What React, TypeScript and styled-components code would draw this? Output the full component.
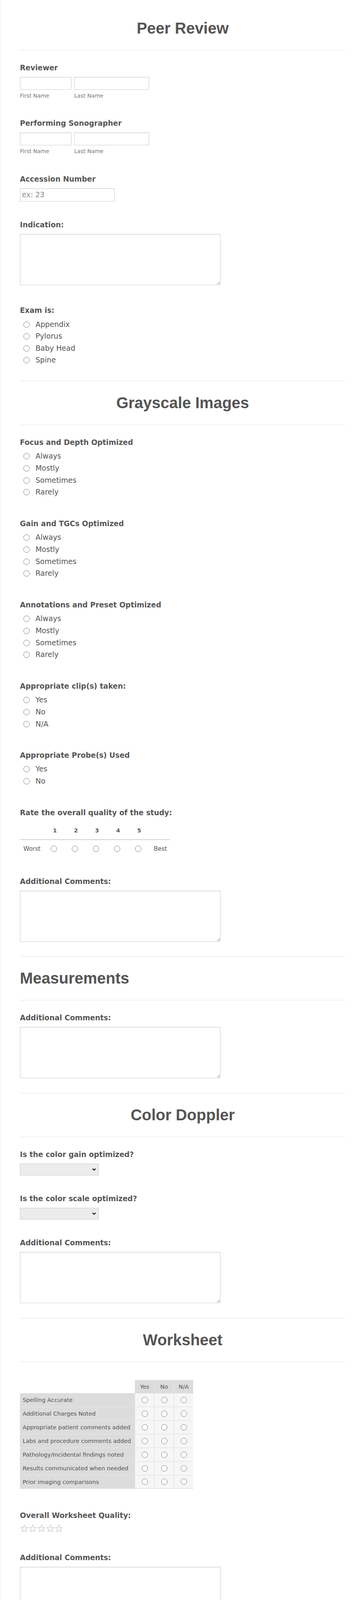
import React from 'react';
import styled, { createGlobalStyle } from 'styled-components';

const GlobalStyle = createGlobalStyle`
  html, body { margin: 0; padding: 0; background: #fff; }
  * { box-sizing: border-box; }
`;

const FONT = `"DejaVu Sans", Verdana, sans-serif`;

const Page = styled.div`
  width: 930px;
  border-left: 1px solid #e8e8e8;
  padding: 0 45px 45px 50px;
  font-family: ${FONT};
  color: #555;
`;

const Header = styled.div<{ $first?: boolean; $top?: number; $bottom?: number }>`
  border-top: ${p => (p.$first ? '0' : '1px solid #e4e4e4')};
  border-bottom: 1px solid #e4e4e4;
  padding-top: ${p => (p.$first ? 48 : p.$top ?? 31)}px;
  padding-bottom: ${p => p.$bottom ?? 32}px;
  margin-bottom: 17px;
`;

const HeaderTitle = styled.h2<{ $align?: 'left' | 'center'; $size?: number }>`
  margin: 0;
  font-family: "Liberation Sans", Arial, sans-serif;
  font-weight: bold;
  font-size: ${p => p.$size ?? 40}px;
  line-height: 48px;
  text-align: ${p => p.$align ?? 'center'};
  color: #555;
`;

const Field = styled.div`
  padding: 17px 0 32.3px;
`;

const Label = styled.div`
  font-weight: bold;
  font-size: 18.67px;
  line-height: 22px;
  color: #555;
  margin-bottom: 12px;
`;

const NameRow = styled.div`
  display: flex;
  gap: 7px;
`;

const NamePart = styled.div<{ $w: number }>`
  width: ${p => p.$w}px;
  display: flex;
  flex-direction: column;
`;

const TextInput = styled.input<{ $w?: number; $h?: number }>`
  display: block;
  width: ${p => (p.$w ? `${p.$w}px` : '100%')};
  height: ${p => p.$h ?? 33}px;
  margin: 0;
  border: 1px solid #cdcdcd;
  box-shadow: inset 0 1px 2px rgba(0, 0, 0, 0.08);
  padding: 0 4px;
  font-family: ${FONT};
  font-size: 18.67px;
  color: #555;
  background: #fff;
  &::placeholder { color: #8a8a8a; }
`;

const SubLabel = styled.span`
  margin-top: 5px;
  font-size: 14px;
  line-height: 21px;
  color: #777;
`;

const TextArea = styled.textarea`
  display: block;
  width: 514px;
  height: 131px;
  margin: 0 0 5px;
  border: 1px solid #cdcdcd;
  box-shadow: inset 0 1px 2px rgba(0, 0, 0, 0.08);
  font-family: ${FONT};
  font-size: 18.67px;
  color: #555;
  background: #fff;
  resize: both;
`;

const RadioGroup = styled.div`
  margin-top: -3px;
  padding: 0 0 5px 9px;
`;

const RadioRow = styled.label`
  display: flex;
  align-items: center;
  gap: 15px;
  height: 30.67px;
  font-size: 18.67px;
  line-height: 22px;
  color: #555;
`;

const Radio = styled.input.attrs({ type: 'radio' })`
  appearance: none;
  -webkit-appearance: none;
  flex: none;
  width: 16px;
  height: 16px;
  margin: 0;
  border: 1px solid #7a7a7a;
  border-radius: 50%;
  background: #fff;
`;

const SelectWrap = styled.div`
  position: relative;
  width: 202px;
  height: 30px;
`;

const Select = styled.select`
  appearance: none;
  -webkit-appearance: none;
  display: block;
  width: 100%;
  height: 100%;
  margin: 0;
  border: 1px solid #c9c9c9;
  background: #ececec;
  font-family: ${FONT};
  font-size: 16px;
`;

const Chevron = styled.svg`
  position: absolute;
  right: 7px;
  top: 50%;
  transform: translateY(-50%);
  pointer-events: none;
`;

const ScaleGrid = styled.div`
  display: grid;
  grid-template-columns: 60px repeat(5, 54px) 55px;
  width: max-content;
`;

const ScaleHead = styled.div<{ $shift?: number }>`
  height: 46px;
  display: flex;
  align-items: center;
  justify-content: center;
  padding-left: ${p => p.$shift ?? 0}px;
  font-weight: bold;
  font-size: 14px;
  color: #555;
  border-bottom: 1px solid #a8a8a8;
`;

const ScaleCell = styled.div<{ $pad?: number; $align?: 'left' | 'center' }>`
  height: 47px;
  display: flex;
  align-items: center;
  justify-content: ${p => (p.$align === 'left' ? 'flex-start' : 'center')};
  padding-left: ${p => p.$pad ?? 0}px;
  font-size: 15.3px;
  color: #555;
`;

const MatrixGrid = styled.div<{ $label: number; $cols: number; $top?: number }>`
  display: grid;
  grid-template-columns: ${p => p.$label}px repeat(${p => p.$cols}, 50px);
  width: max-content;
  margin: ${p => p.$top ?? 0}px 0 9px;
  font-size: 14.67px;
  color: #555;
`;

const MCorner = styled.div`
  height: 33px;
`;

const MHead = styled.div`
  height: 33px;
  display: flex;
  align-items: center;
  justify-content: center;
  background: #dcdcdc;
  border-left: 1px solid #ececec;
`;

const MRowLabel = styled.div<{ $last?: boolean }>`
  height: 35px;
  display: flex;
  align-items: center;
  padding-left: 7px;
  white-space: nowrap;
  background: #dcdcdc;
  border-top: 1px solid #e9e9e9;
  border-bottom: ${p => (p.$last ? '1px solid #d2d2d2' : '0')};
`;

const MCell = styled.div<{ $last?: boolean }>`
  height: 35px;
  display: flex;
  align-items: center;
  justify-content: center;
  background: #f6f6f6;
  border-top: 1px solid #dcdcdc;
  border-left: 1px solid #dcdcdc;
  border-bottom: ${p => (p.$last ? '1px solid #d2d2d2' : '0')};
`;

const Stars = styled.div`
  display: flex;
  height: 25px;
`;

const SubmitRow = styled.div`
  display: flex;
  justify-content: center;
  padding-top: 32px;
`;

const SubmitButton = styled.button`
  width: 103px;
  height: 50px;
  border: 1px solid #b80a0a;
  border-radius: 4px;
  background: linear-gradient(#c70b0b, #f31809);
  color: #fff;
  font-family: "Liberation Sans", Arial, sans-serif;
  font-size: 20px;
  box-shadow: 0 2px 2px rgba(0, 0, 0, 0.2);
  cursor: pointer;
`;

const Star = () => (
  <svg width="22.2" height="20" viewBox="0 0 22 20">
    <path
      d="M11 0.5 L13.35 7.26 L20.51 7.41 L14.8 11.74 L16.88 18.59 L11 14.5 L5.12 18.59 L7.2 11.74 L1.49 7.41 L8.65 7.26 Z"
      fill="#fbfbfb"
      stroke="#b8b8b8"
      strokeWidth="1"
      strokeLinejoin="round"
    />
  </svg>
);

const DropDown = () => (
  <SelectWrap>
    <Select defaultValue="">
      <option value=""></option>
    </Select>
    <Chevron width="10" height="7" viewBox="0 0 10 7">
      <path d="M1.2 1.2 L5 5.2 L8.8 1.2" fill="none" stroke="#000" strokeWidth="2.2" />
    </Chevron>
  </SelectWrap>
);

const RadioList = ({ name, options }: { name: string; options: string[] }) => (
  <RadioGroup>
    {options.map(o => (
      <RadioRow key={o}>
        <Radio name={name} />
        {o}
      </RadioRow>
    ))}
  </RadioGroup>
);

const NameField = ({ label, name }: { label: string; name: string }) => (
  <Field>
    <Label>{label}</Label>
    <NameRow>
      <NamePart $w={132}>
        <TextInput name={`${name}-first`} />
        <SubLabel>First Name</SubLabel>
      </NamePart>
      <NamePart $w={192}>
        <TextInput name={`${name}-last`} />
        <SubLabel>Last Name</SubLabel>
      </NamePart>
    </NameRow>
  </Field>
);

const CommentField = () => (
  <Field>
    <Label>Additional Comments:</Label>
    <TextArea />
  </Field>
);

const MatrixField = ({
  name,
  labelWidth,
  cols,
  rows,
  top,
}: {
  name: string;
  labelWidth: number;
  cols: string[];
  rows: string[];
  top?: number;
}) => (
  <MatrixGrid $label={labelWidth} $cols={cols.length} $top={top}>
    <MCorner />
    {cols.map(c => (
      <MHead key={c}>{c}</MHead>
    ))}
    {rows.map((r, i) => {
      const last = i === rows.length - 1;
      return (
        <React.Fragment key={r}>
          <MRowLabel $last={last}>{r}</MRowLabel>
          {cols.map(c => (
            <MCell key={c} $last={last}>
              <Radio name={`${name}-${i}`} />
            </MCell>
          ))}
        </React.Fragment>
      );
    })}
  </MatrixGrid>
);

const FREQ = ['Always', 'Mostly', 'Sometimes', 'Rarely'];

export default function App() {
  return (
    <>
      <GlobalStyle />
      <Page>
        <Header $first>
          <HeaderTitle>Peer Review</HeaderTitle>
        </Header>

        <NameField label="Reviewer" name="reviewer" />
        <NameField label="Performing Sonographer" name="sonographer" />

        <Field>
          <Label>Accession Number</Label>
          <TextInput $w={243} $h={34} placeholder="ex: 23" />
        </Field>

        <Field>
          <Label>Indication:</Label>
          <TextArea />
        </Field>

        <Field>
          <Label>Exam is:</Label>
          <RadioList name="exam" options={['Appendix', 'Pylorus', 'Baby Head', 'Spine']} />
        </Field>

        <Header>
          <HeaderTitle>Grayscale Images</HeaderTitle>
        </Header>

        <Field>
          <Label>Focus and Depth Optimized</Label>
          <RadioList name="focus" options={FREQ} />
        </Field>
        <Field>
          <Label>Gain and TGCs Optimized</Label>
          <RadioList name="gain" options={FREQ} />
        </Field>
        <Field>
          <Label>Annotations and Preset Optimized</Label>
          <RadioList name="annotations" options={FREQ} />
        </Field>
        <Field>
          <Label>Appropriate clip(s) taken:</Label>
          <RadioList name="clips" options={['Yes', 'No', 'N/A']} />
        </Field>
        <Field>
          <Label>Appropriate Probe(s) Used</Label>
          <RadioList name="probe" options={['Yes', 'No']} />
        </Field>

        <Field>
          <Label>Rate the overall quality of the study:</Label>
          <ScaleGrid>
            <ScaleHead />
            {[1, 2, 3, 4, 5].map(n => (
              <ScaleHead key={n} $shift={5}>
                {n}
              </ScaleHead>
            ))}
            <ScaleHead />
            <ScaleCell $align="left" $pad={9}>
              Worst
            </ScaleCell>
            {[1, 2, 3, 4, 5].map(n => (
              <ScaleCell key={n}>
                <Radio name="quality" />
              </ScaleCell>
            ))}
            <ScaleCell $align="left" $pad={13}>
              Best
            </ScaleCell>
          </ScaleGrid>
        </Field>

        <CommentField />

        <Header>
          <HeaderTitle $align="left">Measurements</HeaderTitle>
        </Header>

        <CommentField />

        <Header>
          <HeaderTitle>Color Doppler</HeaderTitle>
        </Header>

        <Field>
          <Label>Is the color gain optimized?</Label>
          <DropDown />
        </Field>
        <Field>
          <Label>Is the color scale optimized?</Label>
          <DropDown />
        </Field>

        <CommentField />

        <Header>
          <HeaderTitle>Worksheet</HeaderTitle>
        </Header>

        <Field>
          <MatrixField
            name="worksheet"
            labelWidth={294}
            top={12}
            cols={['Yes', 'No', 'N/A']}
            rows={[
              'Spelling Accurate',
              'Additional Charges Noted',
              'Appropriate patient comments added',
              'Labs and procedure comments added',
              'Pathology/Incidental findings noted',
              'Results communicated when needed',
              'Prior imaging comparisons',
            ]}
          />
        </Field>

        <Field>
          <Label>Overall Worksheet Quality:</Label>
          <Stars>
            {[1, 2, 3, 4, 5].map(n => (
              <Star key={n} />
            ))}
          </Stars>
        </Field>

        <CommentField />

        <Field>
          <Label>Appropriate Protocol Followed:</Label>
          <DropDown />
        </Field>

        <Header $top={32} $bottom={37}>
          <HeaderTitle $align="left" $size={32}>
            Dictation
          </HeaderTitle>
        </Header>

        <Field>
          <Label>Radiologist:</Label>
          <TextInput $w={252} $h={32} />
        </Field>

        <Field>
          <Label>Does the dictation correlate with the worksheet?</Label>
          <RadioList name="correlate" options={['Very well', 'Somewhat', 'Hardly']} />
        </Field>

        <Field>
          <Label>Is the dictation accurate?</Label>
          <MatrixField
            name="dictation"
            labelWidth={143}
            cols={['Yes', 'No']}
            rows={['Accurate Spelling', 'Comprehendible', 'All-inclusive', 'Accurate']}
          />
        </Field>

        <CommentField />

        <SubmitRow>
          <SubmitButton type="button">Submit</SubmitButton>
        </SubmitRow>
      </Page>
    </>
  );
}
